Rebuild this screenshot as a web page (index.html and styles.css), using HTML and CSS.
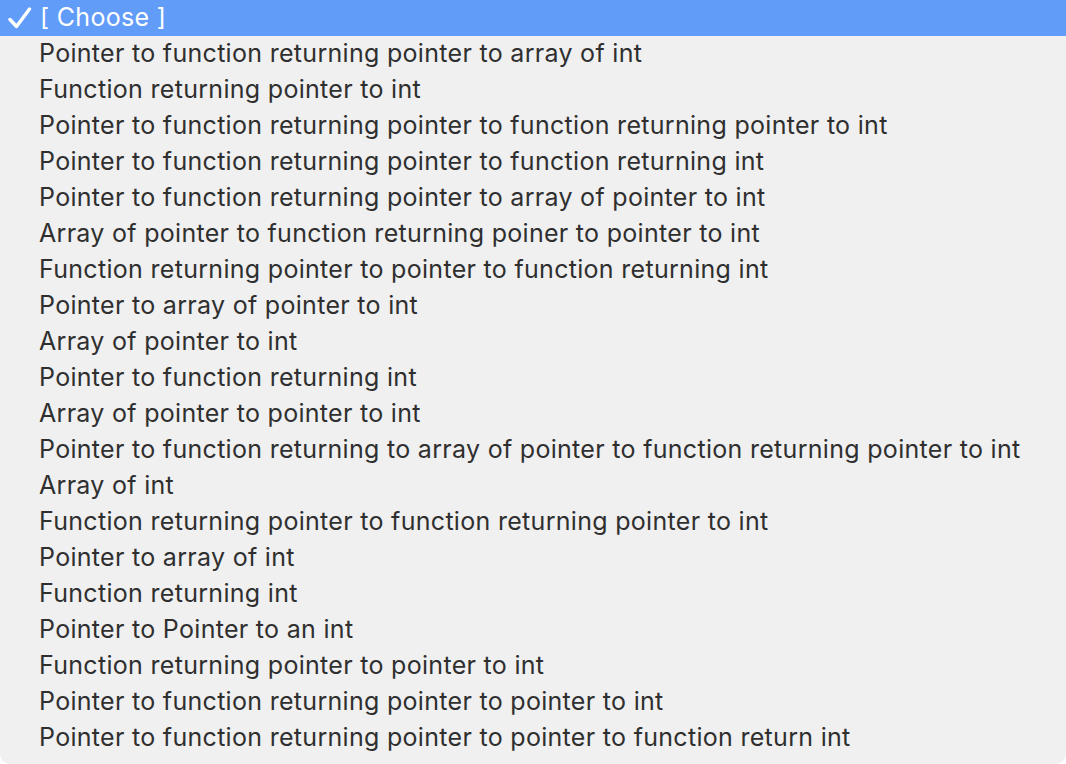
FILE: index.html
```html
<!DOCTYPE html>
<html>
<head>
<meta charset="utf-8">
<link rel="stylesheet" href="styles.css">
</head>
<body>
<div class="menu">
  <div class="item selected"><span class="check"><svg width="24" height="22" viewBox="0 0 24 22"><path d="M2 12.5 L8.5 19.5 L21.5 2" fill="none" stroke="#fff" stroke-width="3.4" stroke-linecap="round" stroke-linejoin="round"/></svg></span><span class="label">[ Choose ]</span></div>
  <div class="item"><span class="label">Pointer to function returning pointer to array of int</span></div>
  <div class="item"><span class="label">Function returning pointer to int</span></div>
  <div class="item"><span class="label">Pointer to function returning pointer to function returning pointer to int</span></div>
  <div class="item"><span class="label">Pointer to function returning pointer to function returning int</span></div>
  <div class="item"><span class="label">Pointer to function returning pointer to array of pointer to int</span></div>
  <div class="item"><span class="label">Array of pointer to function returning poiner to pointer to int</span></div>
  <div class="item"><span class="label">Function returning pointer to pointer to function returning int</span></div>
  <div class="item"><span class="label">Pointer to array of pointer to int</span></div>
  <div class="item"><span class="label">Array of pointer to int</span></div>
  <div class="item"><span class="label">Pointer to function returning int</span></div>
  <div class="item"><span class="label">Array of pointer to pointer to int</span></div>
  <div class="item"><span class="label">Pointer to function returning to array of pointer to function returning pointer to int</span></div>
  <div class="item"><span class="label">Array of int</span></div>
  <div class="item"><span class="label">Function returning pointer to function returning pointer to int</span></div>
  <div class="item"><span class="label">Pointer to array of int</span></div>
  <div class="item"><span class="label">Function returning int</span></div>
  <div class="item"><span class="label">Pointer to Pointer to an int</span></div>
  <div class="item"><span class="label">Function returning pointer to pointer to int</span></div>
  <div class="item"><span class="label">Pointer to function returning pointer to pointer to int</span></div>
  <div class="item"><span class="label">Pointer to function returning pointer to pointer to function return int</span></div>
</div>
</body>
</html>
```
FILE: styles.css
```css
html, body {
  margin: 0;
  padding: 0;
  background: #ffffff;
}
.menu {
  width: 1066px;
  height: 764px;
  box-sizing: border-box;
  background: #f0f0f0;
  border-radius: 0 0 10px 10px;
  padding-bottom: 8px;
  font-family: Inter, "Open Sans", sans-serif;
  font-size: 25px;
  letter-spacing: 0.3px;
  color: #2f2f2f;
  overflow: hidden;
}
.item {
  height: 36px;
  display: flex;
  align-items: center;
  padding-left: 39px;
  padding-bottom: 2px;
  box-sizing: border-box;
  position: relative;
  white-space: nowrap;
}
.selected {
  background: #619cf8;
  color: #ffffff;
  padding-left: 40px;
}
.check {
  position: absolute;
  left: 8px;
  top: 7px;
  width: 24px;
  height: 22px;
}
.check svg {
  display: block;
}
```
